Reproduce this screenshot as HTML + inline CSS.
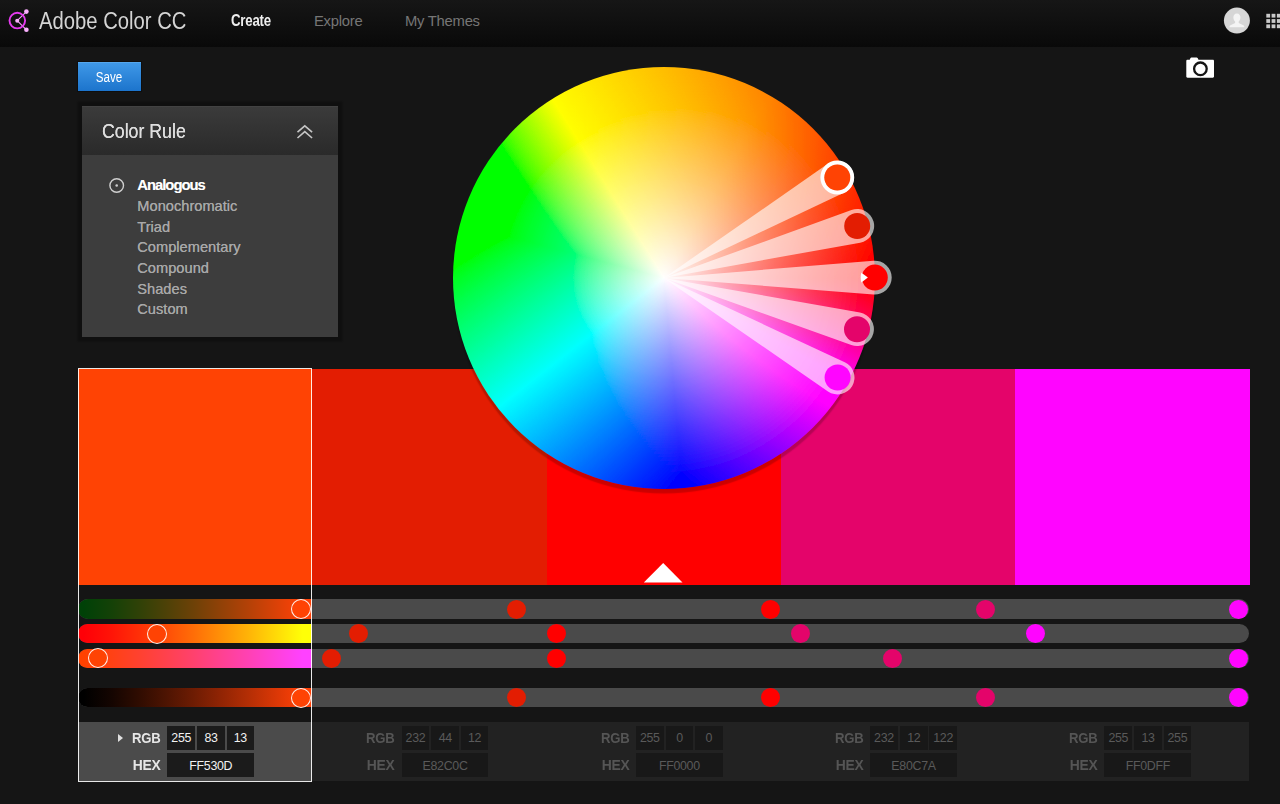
<!DOCTYPE html>
<html><head><meta charset="utf-8"><title>Adobe Color CC</title>
<style>
*{box-sizing:border-box;margin:0;padding:0}
html,body{width:1280px;height:804px;overflow:hidden;background:#151515;font-family:"Liberation Sans",sans-serif;}
body{position:relative}
.abs{position:absolute}
#hdr{position:absolute;left:0;top:0;width:1280px;height:47px;background:linear-gradient(#161616,#0b0b0b 85%,#090909)}
#ttl{position:absolute;left:39px;top:5.5px;font-size:23px;color:#d4d4d4;white-space:nowrap;line-height:30px;font-weight:400;transform:scaleX(0.88);transform-origin:0 0}
.nav{position:absolute;top:12px;font-size:14.8px;color:#767676;white-space:nowrap;line-height:18px;letter-spacing:-0.25px;transform-origin:0 0}
#save{position:absolute;left:78px;top:62.2px;width:63px;height:29.2px;background:linear-gradient(#4099e8,#1c74cc);box-shadow:inset 0 1px 0 #55a6ec,0 0 0 1px #0e0e0e;color:#fff;font-size:14px;text-align:center;line-height:29px}
#save span{display:inline-block;transform:scaleX(0.83);position:relative;top:0.8px;left:-0.5px}
#rule{position:absolute;left:82.3px;top:105.9px;width:256.2px;height:231.5px;background:#3d3d3d;box-shadow:0 0 1.5px 4px #0f0f0f}
#rule .hd2{height:49px;background:linear-gradient(#3b3b3b,#2a2a2a);box-shadow:inset 0 1px 0 #424242}
#rule h3{position:absolute;left:19.5px;top:13.2px;font-size:19.6px;font-weight:400;color:#dedede;line-height:24px;white-space:nowrap;transform:scaleX(0.905);transform-origin:0 0;text-shadow:0 0 0.6px #dedede}
#rule ul{position:absolute;left:55px;top:69.5px;list-style:none}
#rule li{font-size:14.6px;color:#a8a8a8;height:20.65px;line-height:20.65px;white-space:nowrap;letter-spacing:0.03px;text-shadow:0 0 0.4px #a8a8a8}
#rule li.on{color:#fff;font-weight:700;letter-spacing:-1px;font-size:14.8px}
.swatch{position:absolute;top:369px;height:215.6px}
.track{position:absolute;left:78px;width:1171.4px;height:19.6px;border-radius:10px;background:#4a4a4a;overflow:hidden}
.track i{position:absolute;left:0;top:0;width:234.1px;height:100%}
.hd{position:absolute;width:19px;height:19px;border-radius:50%}
.hd.sel{width:20px;height:20px;border:1.1px solid rgba(255,255,255,0.92)}
.pn{position:absolute;top:722px;width:234.4px;height:59.3px;background:#222}
.pn.sel{background:#4b4b4b}
.lb{position:absolute;left:0;width:82.5px;text-align:right;font-size:14.6px;font-weight:700;color:#555;line-height:16px;letter-spacing:-0.3px;transform:scaleX(0.9);transform-origin:100% 0}
.pn.sel .lb{color:#e6e6e6}
.l1{top:8.2px}.l2{top:34.8px;transform:scaleX(0.95)}
.in{position:absolute;top:4.3px;width:27.6px;height:24.2px;background:#181818;color:#5a5a5a;font-size:12.4px;text-align:center;line-height:25.4px;letter-spacing:-0.3px}
.pn.sel .in{color:#f2f2f2;background:#1b1b1b}
.in.hx{left:89.4px;top:31.2px;width:86.7px;height:23.8px;line-height:27px}
.tri{position:absolute;left:39.9px;top:12.1px;width:0;height:0;border-left:5.4px solid #e0e0e0;border-top:4.9px solid transparent;border-bottom:4.9px solid transparent}
#selbox{position:absolute;left:78px;top:368px;width:234px;height:414px;border:1px solid rgba(255,255,255,0.9)}
</style></head><body>
<div id="hdr">
<svg class="abs" style="left:0;top:0" width="50" height="46" viewBox="0 0 50 46">
<g stroke="#f9a3ff" stroke-width="1.1" fill="none"><path d="M17.2 20.7 L26.4 11.6 M17.2 20.7 L26.4 29.8"/></g>
<circle cx="17.3" cy="20.6" r="7.8" fill="none" stroke="#e53af0" stroke-width="1.9"/>
<circle cx="17.2" cy="20.7" r="2" fill="#fbb0ff"/><circle cx="26.4" cy="11.6" r="2.3" fill="#fbb0ff"/><circle cx="26.4" cy="29.8" r="2.3" fill="#fbb0ff"/>
</svg>
<div id="ttl">Adobe Color CC</div>
<div class="nav" style="left:230.5px;top:11.7px;color:#eee;font-weight:700;font-size:15.6px;transform:scaleX(0.85)">Create</div>
<div class="nav" style="left:314px">Explore</div>
<div class="nav" style="left:405px">My Themes</div>
<svg class="abs" style="left:1220px;top:4px" width="60" height="36" viewBox="1220 4 60 36">
<circle cx="1236.9" cy="20.6" r="13" fill="#d6d6d6"/>
<path d="M1236.9 13.6c2.3 0 3.5 1.7 3.5 4 0 1.7-.7 3.2-1.7 4v1.5l4.6 2.2c.6.3 1 .8 1 1.4v.6h-14.8v-.6c0-.6.4-1.1 1-1.4l4.6-2.2v-1.5c-1-.8-1.7-2.300-1.7-4 0-2.300 1.200-4 3.500-4z" fill="#f4f4f4"/>
<g fill="#c9c9c9"><rect x="1266.300" y="13.800" width="3.800" height="3.800"/><rect x="1271.600" y="13.800" width="3.800" height="3.800"/><rect x="1276.900" y="13.800" width="3.800" height="3.800"/>
<rect x="1266.300" y="19.100" width="3.800" height="3.800"/><rect x="1271.600" y="19.100" width="3.800" height="3.800"/><rect x="1276.900" y="19.100" width="3.800" height="3.800"/>
<rect x="1266.300" y="24.400" width="3.800" height="3.800"/><rect x="1271.600" y="24.400" width="3.800" height="3.800"/><rect x="1276.900" y="24.400" width="3.800" height="3.800"/></g>
</svg>
</div>
<div id="save"><span>Save</span></div>
<svg class="abs" style="left:1180px;top:52px" width="44" height="32" viewBox="1180 52 44 32">
<path d="M1187.500 59.800h2.200l.8-1.800c.2-.4.500-.6.900-.6h5.200c.4 0 .8.200 1 .6l.900 1.800h14.300c.7 0 1.200.5 1.200 1.200v15.600c0 .7-.5 1.200-1.200 1.200h-25.300c-.7 0-1.200-.5-1.200-1.200v-15.600c0-.7.500-1.200 1.200-1.200z" fill="#fff"/>
<circle cx="1200.400" cy="68.800" r="6.300" fill="#fff" stroke="#151515" stroke-width="2.300"/>
</svg>
<div id="rule"><div class="hd2"></div><h3>Color Rule</h3>
<svg class="abs" style="left:214px;top:18px" width="18" height="16" viewBox="0 0 18 16"><path d="M1.500 8.200 L8.800 1.800 L16.100 8.200 M1.500 14 L8.800 7.600 L16.100 14" fill="none" stroke="#c6c6c6" stroke-width="1.600"/></svg>
<svg class="abs" style="left:26px;top:71px" width="18" height="18" viewBox="0 0 18 18"><circle cx="8.700" cy="8.500" r="6.800" fill="none" stroke="#cfcfcf" stroke-width="1.400"/><circle cx="8.700" cy="8.500" r="1.300" fill="#cfcfcf"/></svg>
<ul><li class="on">Analogous</li><li>Monochromatic</li><li>Triad</li><li>Complementary</li><li>Compound</li><li>Shades</li><li>Custom</li></ul>
</div>
<div class="swatch" style="left:78.00px;width:234.58px;background:#FF4304"></div>
<div class="swatch" style="left:312.28px;width:234.58px;background:#E31D02"></div>
<div class="swatch" style="left:546.56px;width:234.58px;background:#FF0000"></div>
<div class="swatch" style="left:780.84px;width:234.58px;background:#E4046A"></div>
<div class="swatch" style="left:1015.12px;width:234.58px;background:#FF05FF"></div>
<svg class="abs" style="left:640px;top:560px" width="46" height="24" viewBox="640 560 46 24"><path d="M643.800 582.500 L682.500 582.500 L663.200 563 Z" fill="#fff"/></svg>
<svg width="0" height="0" style="position:absolute;left:0;top:0"><filter id="wf" color-interpolation-filters="sRGB" x="0" y="0" width="1" height="1">
<feComponentTransfer><feFuncR type="gamma" exponent="2.2"/><feFuncG type="gamma" exponent="2.2"/><feFuncB type="gamma" exponent="2.2"/></feComponentTransfer>
<feColorMatrix type="matrix" values="1.3984 -0.3984 0 0 0  0 1 0 0 0  0 -0.0429 1.0429 0 0  0 0 0 1 0"/>
<feComponentTransfer><feFuncR type="gamma" exponent="0.5555"/><feFuncG type="gamma" exponent="0.5555"/><feFuncB type="gamma" exponent="0.5555"/></feComponentTransfer>
</filter></svg>
<div style="position:absolute;left:452.79999999999995px;top:66.89999999999998px;width:422.0px;height:422.0px;border-radius:50%;box-shadow:0 4.3px 1.2px 0.3px rgba(0,0,0,0.2)"></div>
<div id="wheel" style="position:absolute;left:452.79999999999995px;top:66.89999999999998px;width:422.0px;height:422.0px;border-radius:50%;filter:url(#wf);background:radial-gradient(circle closest-side,#fff 0%,rgba(255,255,255,0) 100%),conic-gradient(from 90deg,#f00 0deg,#f0f 30deg,#00f 85deg,#0ff 142deg,#0f0 195deg,#ff0 238deg,#ff9500 300deg,#f00 360deg)"></div>
<svg class="abs" style="left:0;top:0" width="1280" height="804" viewBox="0 0 1280 804">
<path d="M663.80,277.90 L827.82,163.87 A16.6,16.6 0 1 1 844.40,192.51 Z" fill="#fff" fill-opacity="0.62"/>
<path d="M663.80,277.90 L851.46,210.11 A16.9,16.9 0 1 1 860.19,242.63 Z" fill="#fff" fill-opacity="0.62"/>
<path d="M663.80,277.90 L873.42,260.76 A16.9,16.9 0 1 1 873.47,294.45 Z" fill="#fff" fill-opacity="0.62"/>
<path d="M663.80,277.90 L859.94,312.56 A16.9,16.9 0 1 1 851.30,345.11 Z" fill="#fff" fill-opacity="0.62"/>
<path d="M663.80,277.90 L844.74,362.18 A16.9,16.9 0 1 1 827.99,391.40 Z" fill="#fff" fill-opacity="0.62"/>
<circle cx="837.3" cy="177.5" r="14.8" fill="none" stroke="#fff" stroke-width="4.200000000000001"/>
<circle cx="837.3" cy="177.5" r="13.0" fill="#FF4304"/>
<circle cx="857.2" cy="226.0" r="13.0" fill="#E31D02"/>
<circle cx="874.8" cy="277.6" r="13.0" fill="#FF0000"/>
<circle cx="857.0" cy="329.2" r="13.0" fill="#E4046A"/>
<circle cx="837.6" cy="377.5" r="13.0" fill="#FF05FF"/>
<clipPath id="c3"><circle cx="874.8" cy="277.6" r="14.3"/></clipPath>
 <path d="M860.4,272.0 L867.9,277.6 L860.4,283.20000000000005 Z" fill="#fff" clip-path="url(#c3)"/>
</svg>
<div class="track" style="top:599.4px"><i style="background:linear-gradient(90deg,rgb(0,65,7) 2.5%,rgb(20,65,7) 14.2%,rgb(47,65,7) 25.9%,rgb(77,65,7) 37.6%,rgb(109,65,7) 49.2%,rgb(144,65,7) 60.9%,rgb(179,65,7) 72.6%,rgb(217,65,7) 84.3%,rgb(255,65,7) 96.0%)"></i></div>
<div class="track" style="top:623.9px"><i style="background:linear-gradient(90deg,rgb(255,0,7) 2.5%,rgb(255,20,7) 14.2%,rgb(255,47,7) 25.9%,rgb(255,77,7) 37.6%,rgb(255,109,7) 49.2%,rgb(255,144,7) 60.9%,rgb(255,179,7) 72.6%,rgb(255,217,7) 84.3%,rgb(255,255,7) 96.0%)"></i></div>
<div class="track" style="top:648.500px"><i style="background:linear-gradient(90deg,rgb(255,65,0) 2.5%,rgb(255,65,20) 14.2%,rgb(255,65,47) 25.9%,rgb(255,65,77) 37.6%,rgb(255,65,109) 49.2%,rgb(255,65,144) 60.9%,rgb(255,65,179) 72.6%,rgb(255,65,217) 84.3%,rgb(255,65,255) 96.0%)"></i></div>
<div class="track" style="top:687.9px"><i style="background:linear-gradient(90deg,rgb(0,0,0) 2.5%,rgb(20,5,1) 14.2%,rgb(47,12,1) 25.9%,rgb(77,20,2) 37.6%,rgb(109,28,3) 49.2%,rgb(144,36,4) 60.9%,rgb(179,46,5) 72.6%,rgb(217,55,6) 84.3%,rgb(255,65,7) 96.0%)"></i></div>
<div class="hd sel" style="left:290.8px;top:599.2px;background:#FF4304"></div>
<div class="hd sel" style="left:147.2px;top:623.7px;background:#FF4304"></div>
<div class="hd sel" style="left:88.4px;top:648.3px;background:#FF4304"></div>
<div class="hd sel" style="left:290.8px;top:687.7px;background:#FF4304"></div>
<div class="hd" style="left:507.0px;top:599.7px;background:#E31D02"></div>
<div class="hd" style="left:349.2px;top:624.2px;background:#E31D02"></div>
<div class="hd" style="left:322.4px;top:648.8px;background:#E31D02"></div>
<div class="hd" style="left:507.0px;top:688.2px;background:#E31D02"></div>
<div class="hd" style="left:760.6px;top:599.7px;background:#FF0000"></div>
<div class="hd" style="left:546.6px;top:624.2px;background:#FF0000"></div>
<div class="hd" style="left:546.6px;top:648.8px;background:#FF0000"></div>
<div class="hd" style="left:760.6px;top:688.2px;background:#FF0000"></div>
<div class="hd" style="left:975.5px;top:599.7px;background:#E4046A"></div>
<div class="hd" style="left:790.9px;top:624.2px;background:#E4046A"></div>
<div class="hd" style="left:883.2px;top:648.8px;background:#E4046A"></div>
<div class="hd" style="left:975.5px;top:688.2px;background:#E4046A"></div>
<div class="hd" style="left:1229.1px;top:599.7px;background:#FF05FF"></div>
<div class="hd" style="left:1026.0px;top:624.2px;background:#FF05FF"></div>
<div class="hd" style="left:1229.1px;top:648.8px;background:#FF05FF"></div>
<div class="hd" style="left:1229.1px;top:688.2px;background:#FF05FF"></div>
<div class="pn sel" style="left:78.0px"><div class="tri"></div><div class="lb l1">RGB</div><div class="lb l2">HEX</div>
<div class="in" style="left:89.4px">255</div><div class="in" style="left:119.2px">83</div><div class="in" style="left:148.5px">13</div><div class="in hx">FF530D</div></div>
<div class="pn" style="left:312.3px"><div class="lb l1">RGB</div><div class="lb l2">HEX</div>
<div class="in" style="left:89.4px">232</div><div class="in" style="left:119.2px">44</div><div class="in" style="left:148.5px">12</div><div class="in hx">E82C0C</div></div>
<div class="pn" style="left:546.6px"><div class="lb l1">RGB</div><div class="lb l2">HEX</div>
<div class="in" style="left:89.4px">255</div><div class="in" style="left:119.2px">0</div><div class="in" style="left:148.5px">0</div><div class="in hx">FF0000</div></div>
<div class="pn" style="left:780.8px"><div class="lb l1">RGB</div><div class="lb l2">HEX</div>
<div class="in" style="left:89.4px">232</div><div class="in" style="left:119.2px">12</div><div class="in" style="left:148.5px">122</div><div class="in hx">E80C7A</div></div>
<div class="pn" style="left:1015.1px"><div class="lb l1">RGB</div><div class="lb l2">HEX</div>
<div class="in" style="left:89.4px">255</div><div class="in" style="left:119.2px">13</div><div class="in" style="left:148.5px">255</div><div class="in hx">FF0DFF</div></div>
<div id="selbox"></div>
</body></html>
